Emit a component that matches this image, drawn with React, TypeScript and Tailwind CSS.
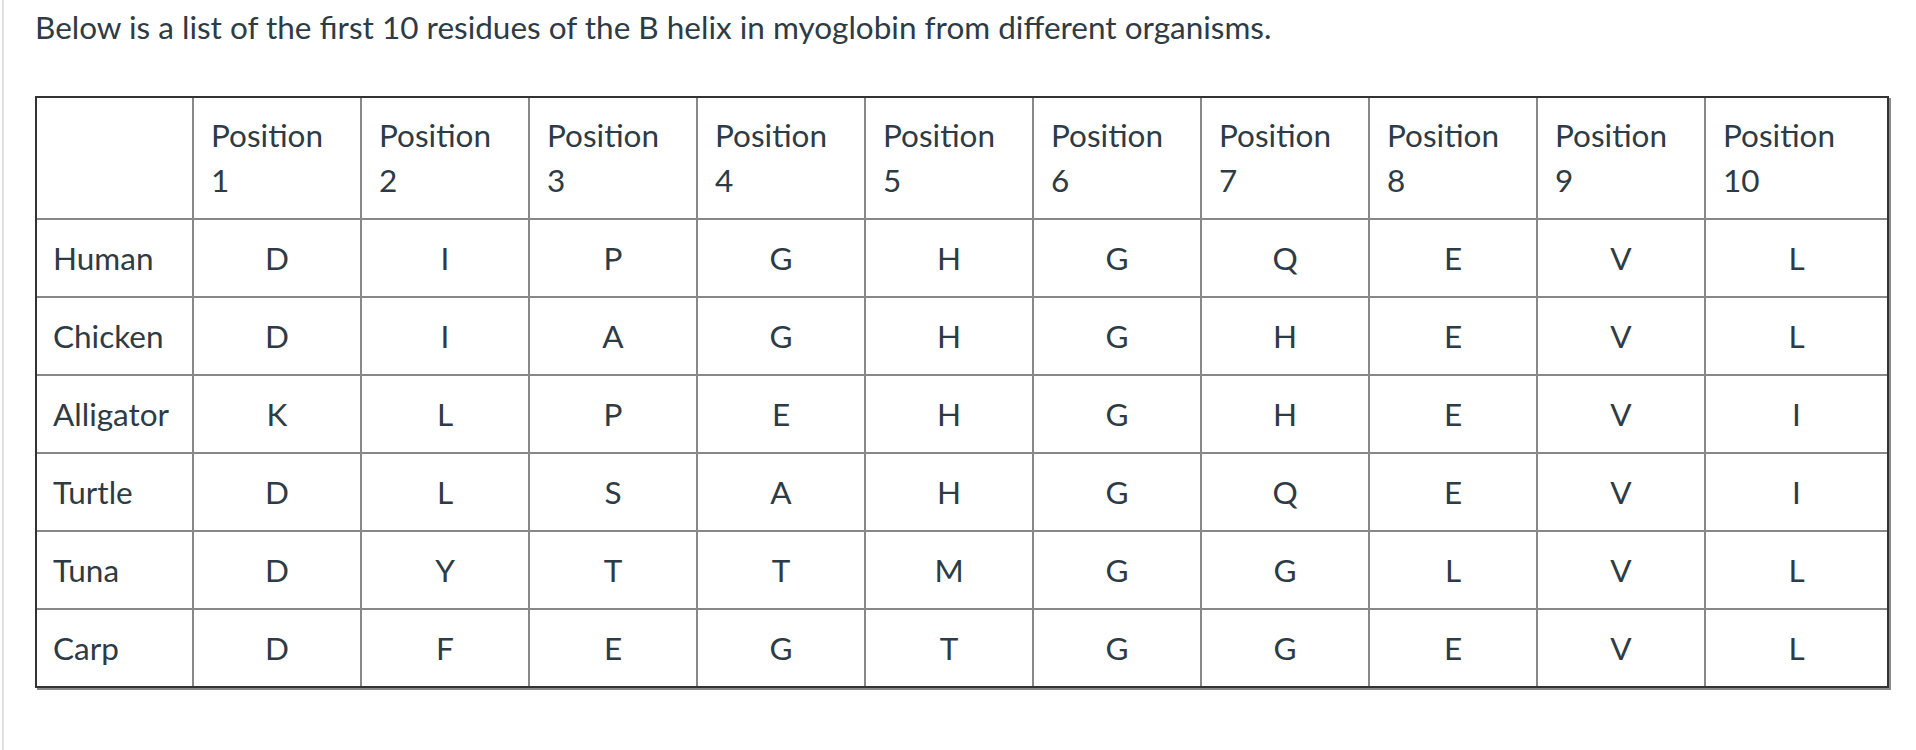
const organisms: { name: string; residues: string[] }[] = [
  { name: 'Human', residues: ['D', 'I', 'P', 'G', 'H', 'G', 'Q', 'E', 'V', 'L'] },
  { name: 'Chicken', residues: ['D', 'I', 'A', 'G', 'H', 'G', 'H', 'E', 'V', 'L'] },
  { name: 'Alligator', residues: ['K', 'L', 'P', 'E', 'H', 'G', 'H', 'E', 'V', 'I'] },
  { name: 'Turtle', residues: ['D', 'L', 'S', 'A', 'H', 'G', 'Q', 'E', 'V', 'I'] },
  { name: 'Tuna', residues: ['D', 'Y', 'T', 'T', 'M', 'G', 'G', 'L', 'V', 'L'] },
  { name: 'Carp', residues: ['D', 'F', 'E', 'G', 'T', 'G', 'G', 'E', 'V', 'L'] },
];

const positions = [1, 2, 3, 4, 5, 6, 7, 8, 9, 10];

export default function App() {
  return (
    <div className="min-h-[750px] bg-white font-[Lato,Arial,sans-serif] text-[#2D3B45] text-[31.5px] leading-[45px]">
      <div className="ml-[2px] min-h-[750px] border-l-2 border-[#e0e0e0] pl-[31px] pt-[5px]">
        <p className="mb-[46px]">
          Below is a list of the first 10 residues of the B helix in myoglobin from different organisms.
        </p>

        {/* outer frame */}
        <div className="inline-block border-2 border-[#333333] shadow-[2px_2px_0_#8a8a8a]">
          <table className="table-fixed w-[1850px] border-collapse border-hidden">
            <colgroup>
              <col className="w-[156px]" />
              {positions.slice(0, 9).map((p) => (
                <col key={p} className="w-[168px]" />
              ))}
              <col className="w-[182px]" />
            </colgroup>
            <thead>
              <tr>
                <th className="border-2 border-[#888888] px-[17px] py-[15px]"></th>
                {positions.map((p) => (
                  <th
                    key={p}
                    className="border-2 border-[#888888] px-[17px] py-[15px] text-left align-top font-normal"
                  >
                    Position
                    <br />
                    {p}
                  </th>
                ))}
              </tr>
            </thead>
            <tbody>
              {organisms.map((o) => (
                <tr key={o.name}>
                  <td className="border-2 border-[#888888] pl-[16px] pr-[2px] pt-[16px] pb-[15px] text-left whitespace-nowrap">
                    {o.name}
                  </td>
                  {o.residues.map((r, i) => (
                    <td key={i} className="border-2 border-[#888888] px-[17px] pt-[16px] pb-[15px] text-center">
                      {r}
                    </td>
                  ))}
                </tr>
              ))}
            </tbody>
          </table>
        </div>
      </div>
    </div>
  );
}
